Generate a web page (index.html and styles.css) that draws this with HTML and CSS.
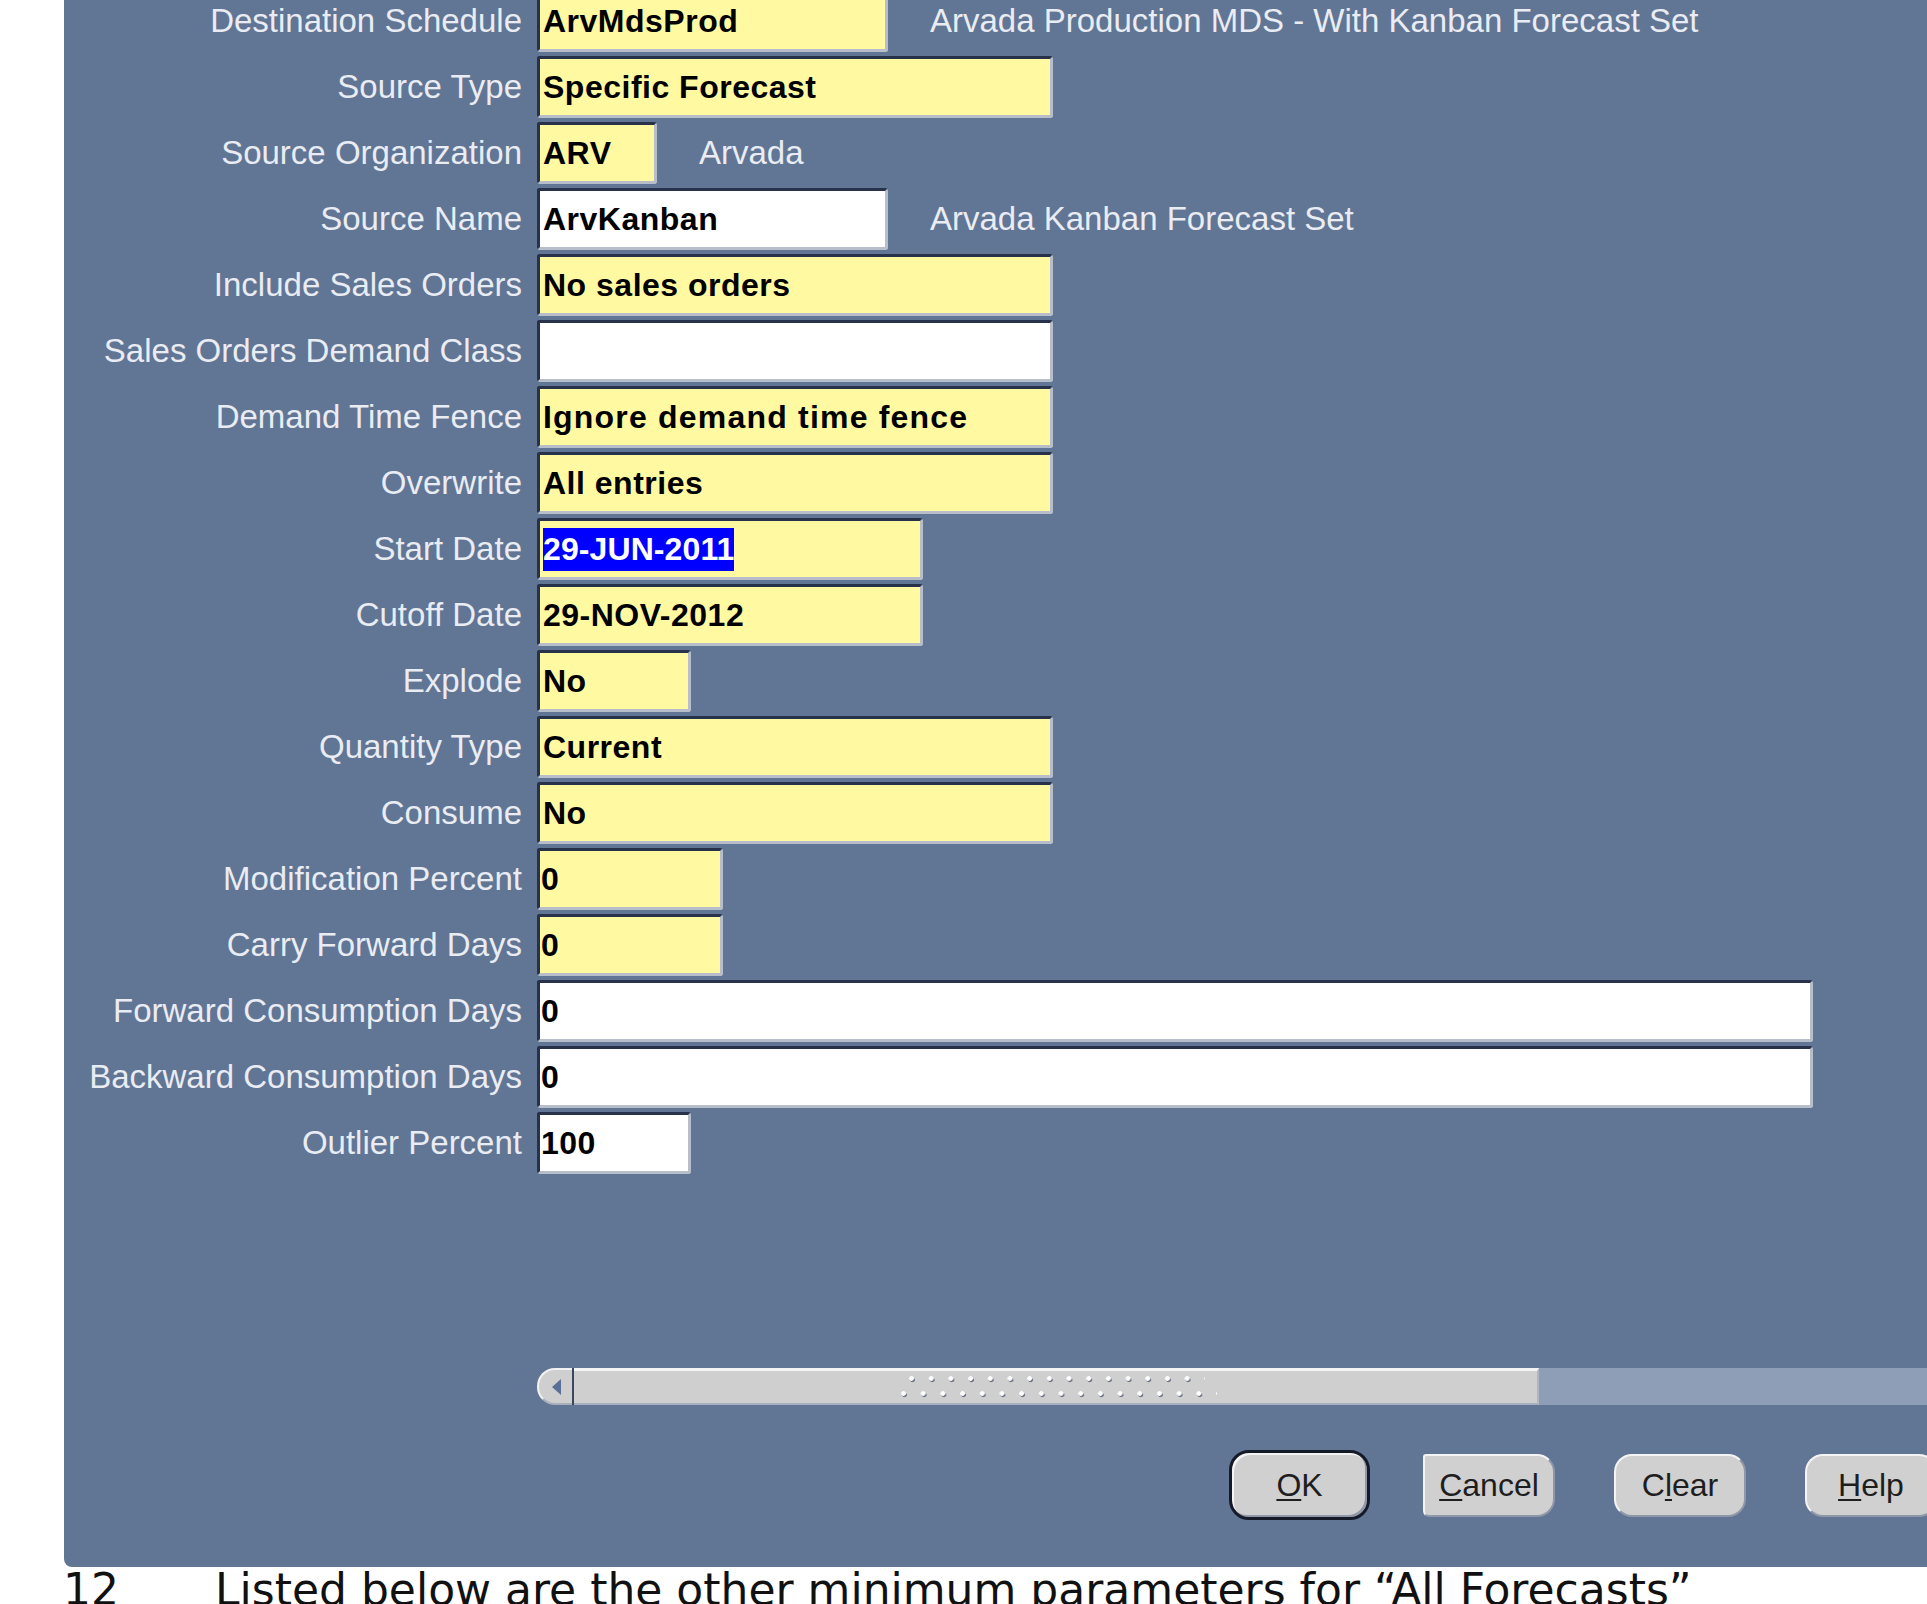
FILE: index.html
```html
<!DOCTYPE html>
<html>
<head>
<meta charset="utf-8">
<link rel="stylesheet" href="styles.css">
</head>
<body>
<div class="panel">
  <div class="form">
    <div class="label">Destination Schedule</div>
    <div class="cell"><div class="field yellow w351"><span class="val">ArvMdsProd</span></div><span class="desc">Arvada Production MDS - With Kanban Forecast Set</span></div>

    <div class="label">Source Type</div>
    <div class="cell"><div class="field yellow w516"><span class="val">Specific Forecast</span></div></div>

    <div class="label">Source Organization</div>
    <div class="cell"><div class="field yellow w120"><span class="val">ARV</span></div><span class="desc">Arvada</span></div>

    <div class="label">Source Name</div>
    <div class="cell"><div class="field white w351"><span class="val">ArvKanban</span></div><span class="desc">Arvada Kanban Forecast Set</span></div>

    <div class="label">Include Sales Orders</div>
    <div class="cell"><div class="field yellow w516"><span class="val">No sales orders</span></div></div>

    <div class="label">Sales Orders Demand Class</div>
    <div class="cell"><div class="field white w516"></div></div>

    <div class="label">Demand Time Fence</div>
    <div class="cell"><div class="field yellow w516"><span class="val wide">Ignore demand time fence</span></div></div>

    <div class="label">Overwrite</div>
    <div class="cell"><div class="field yellow w516"><span class="val">All entries</span></div></div>

    <div class="label">Start Date</div>
    <div class="cell"><div class="field yellow w386"><span class="val sel">29-JUN-2011</span></div></div>

    <div class="label">Cutoff Date</div>
    <div class="cell"><div class="field yellow w386"><span class="val">29-NOV-2012</span></div></div>

    <div class="label">Explode</div>
    <div class="cell"><div class="field yellow w154"><span class="val">No</span></div></div>

    <div class="label">Quantity Type</div>
    <div class="cell"><div class="field yellow w516"><span class="val">Current</span></div></div>

    <div class="label">Consume</div>
    <div class="cell"><div class="field yellow w516"><span class="val">No</span></div></div>

    <div class="label">Modification Percent</div>
    <div class="cell"><div class="field yellow w186"><span class="val num">0</span></div></div>

    <div class="label">Carry Forward Days</div>
    <div class="cell"><div class="field yellow w186"><span class="val num">0</span></div></div>

    <div class="label">Forward Consumption Days</div>
    <div class="cell"><div class="field white w1276"><span class="val num">0</span></div></div>

    <div class="label">Backward Consumption Days</div>
    <div class="cell"><div class="field white w1276"><span class="val num">0</span></div></div>

    <div class="label">Outlier Percent</div>
    <div class="cell"><div class="field white w154"><span class="val num">100</span></div></div>
  </div>

  <div class="hscroll">
    <div class="sb-btn">
      <svg width="14" height="18" viewBox="0 0 14 18"><polygon points="11,1 11,17 2,9" fill="#5a7096"/></svg>
    </div>
    <div class="sb-sep"></div>
    <div class="sb-thumb">
      <div class="grip">
        <div class="grip-row r1"></div>
        <div class="grip-row r2"></div>
      </div>
    </div>
    <div class="sb-trough"></div>
  </div>

  <div class="buttons">
    <div class="btn default"><u>O</u>K</div>
    <div class="btn cancel"><u>C</u>ancel</div>
    <div class="btn">C<u>l</u>ear</div>
    <div class="btn"><u>H</u>elp</div>
  </div>
</div>
<div class="caption"><span class="cap-num">12</span><span class="cap-text">Listed below are the other minimum parameters for “All Forecasts”</span></div>
</body>
</html>
```
FILE: styles.css
```css
html, body {
  margin: 0;
  padding: 0;
  height: 1604px;
  overflow: hidden;
  background: #ffffff;
}

body {
  font-family: "Liberation Sans", Arial, sans-serif;
}

.panel {
  margin-left: 64px;
  height: 1567px;
  background: #617595;
  border-bottom-left-radius: 8px;
  overflow: hidden;
  display: flex;
  flex-direction: column;
}

.form {
  margin-top: -10px;
  display: grid;
  grid-template-columns: 458px 1fr;
  column-gap: 15px;
  grid-auto-rows: 62px;
  row-gap: 4px;
}

.label {
  display: flex;
  align-items: center;
  justify-content: flex-end;
  color: #e9ecf2;
  font-size: 33px;
  white-space: nowrap;
}

.cell {
  display: flex;
  align-items: center;
  min-width: 0;
}

.field {
  box-sizing: border-box;
  height: 62px;
  flex: none;
  display: flex;
  align-items: center;
  border-top: 3px solid #27314a;
  border-left: 3px solid #27314a;
  border-right: 3px solid #b7bdc9;
  border-bottom: 3px solid #b7bdc9;
  border-radius: 3px;
  padding-left: 3px;
  overflow: hidden;
}

.yellow { background: #fffaa2; }
.white { background: #ffffff; }

.w120 { width: 120px; }
.w154 { width: 154px; }
.w186 { width: 186px; }
.w351 { width: 351px; }
.w386 { width: 386px; }
.w516 { width: 516px; }
.w1276 { width: 1276px; }

.val {
  font-weight: bold;
  font-size: 32px;
  color: #000000;
  white-space: nowrap;
  letter-spacing: 0.5px;
}

.val.wide {
  letter-spacing: 1.2px;
}

.val.num {
  margin-left: -2px;
}

.val.sel {
  display: inline-block;
  background: #0000ff;
  color: #ffffff;
  line-height: 43px;
  height: 43px;
  letter-spacing: 0.1px;
}

.desc {
  margin-left: 42px;
  color: #e9ecf2;
  font-size: 33px;
  white-space: nowrap;
}

/* horizontal scrollbar */
.hscroll {
  margin-top: 194px;
  margin-left: 473px;
  height: 37px;
  display: flex;
  flex: none;
}

.sb-btn {
  box-sizing: border-box;
  width: 35px;
  height: 37px;
  background: #cfcfcf;
  border-radius: 18px 0 0 18px;
  border-top: 2px solid #f2f2f2;
  border-left: 2px solid #f2f2f2;
  border-bottom: 2px solid #a9b0bd;
  display: flex;
  align-items: center;
  justify-content: center;
  padding-left: 2px;
}

.sb-sep {
  width: 2px;
  height: 37px;
  background: #3b4660;
}

.sb-thumb {
  box-sizing: border-box;
  width: 965px;
  height: 37px;
  background: #cfcfcf;
  border-top: 3px solid #f4f4f4;
  border-bottom: 2px solid #a9b0bd;
  border-right: 2px solid #b0b6c2;
  display: flex;
  align-items: center;
  justify-content: center;
}

.grip {
  width: 316px;
  height: 22px;
  display: flex;
  flex-direction: column;
  justify-content: space-between;
  margin-left: 6px;
}

.grip-row {
  height: 7px;
  background-image: radial-gradient(circle at 2.5px 2.5px, #ffffff 2px, transparent 2.6px),
                    radial-gradient(circle at 3.5px 4px, #6f7686 2px, transparent 2.6px);
  background-size: 19.7px 7px;
  background-repeat: repeat-x;
}

.grip-row.r1 {
  margin-left: 8px;
  width: 296px;
}

.grip-row.r2 {
  width: 316px;
}

.sb-trough {
  flex: 1;
  height: 37px;
  background: #8e9eb7;
}

/* buttons */
.buttons {
  margin-top: 45px;
  margin-left: 1165px;
  display: flex;
  align-items: center;
  gap: 59px;
}

.btn {
  box-sizing: border-box;
  flex: none;
  width: 132px;
  height: 63px;
  background: #d0d0d0;
  border-radius: 18px;
  border-top: 2px solid #f4f4f4;
  border-left: 2px solid #f4f4f4;
  border-right: 2px solid #8f97a8;
  border-bottom: 2px solid #8f97a8;
  display: flex;
  align-items: center;
  justify-content: center;
  font-size: 32px;
  color: #1e1e1e;
  white-space: nowrap;
}

.btn u {
  text-decoration-thickness: 2px;
  text-underline-offset: 3px;
}

.btn.default {
  width: 141px;
  height: 70px;
  border: 3px solid #151a28;
  border-radius: 20px;
  box-shadow: inset 2px 2px 0 #f4f4f4, inset -2px -2px 0 #8f97a8;
  margin-right: -6px;
}

.btn.cancel {
  border-radius: 3px 18px 18px 6px;
}

/* caption below screenshot */
.caption {
  display: flex;
  margin-top: 1px;
  padding-left: 63px;
  font-family: "DejaVu Sans", "Noto Sans", sans-serif;
  font-size: 44px;
  line-height: 44px;
  color: #111111;
  white-space: nowrap;
}

.cap-num {
  width: 152px;
  flex: none;
}
```
